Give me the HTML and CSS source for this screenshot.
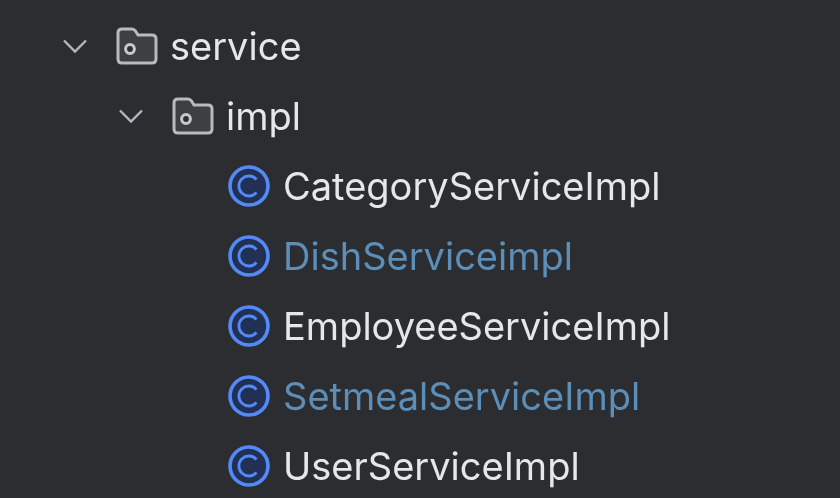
FILE: index.html
```html
<!DOCTYPE html>
<html lang="en">
<head>
    <meta charset="UTF-8">
    <title>Project Tree</title>
    <link rel="stylesheet" href="styles.css">
</head>
<body>
    <svg class="icon-defs" width="0" height="0">
        <symbol id="chevron" viewBox="0 0 26 16">
            <path d="M2 2.5 L13 13.5 L24 2.5" fill="none" stroke="#b4b6bb" stroke-width="2.4"/>
        </symbol>
        <symbol id="folder" viewBox="0 0 42 38">
            <path d="M6 2 H16 Q18 2 19.5 4 L22 8 H36 Q40 8 40 12 V32 Q40 36 36 36 H6 Q2 36 2 32 V6 Q2 2 6 2 Z" fill="#3e3f42" stroke="#b9babd" stroke-width="3"/>
            <circle cx="14" cy="22" r="4.4" fill="#2b2d30" stroke="#c9cacd" stroke-width="3"/>
        </symbol>
        <symbol id="class" viewBox="0 0 42 42">
            <circle cx="21" cy="21" r="19" fill="#223053" stroke="#548af7" stroke-width="3.6"/>
            <path d="M28.5 14.5 A10 10 0 1 0 28.5 27.5" fill="none" stroke="#548af7" stroke-width="2.8"/>
        </symbol>
    </svg>

    <ul class="tree">
        <li class="row depth-0">
            <svg class="chevron"><use href="#chevron"/></svg>
            <svg class="folder"><use href="#folder"/></svg>
            <span>service</span>
        </li>
        <li class="row depth-1">
            <svg class="chevron"><use href="#chevron"/></svg>
            <svg class="folder"><use href="#folder"/></svg>
            <span>impl</span>
        </li>
        <li class="row depth-2">
            <svg class="class-icon"><use href="#class"/></svg>
            <span>CategoryServiceImpl</span>
        </li>
        <li class="row depth-2 modified">
            <svg class="class-icon"><use href="#class"/></svg>
            <span>DishServiceimpl</span>
        </li>
        <li class="row depth-2">
            <svg class="class-icon"><use href="#class"/></svg>
            <span>EmployeeServiceImpl</span>
        </li>
        <li class="row depth-2 modified">
            <svg class="class-icon"><use href="#class"/></svg>
            <span>SetmealServiceImpl</span>
        </li>
        <li class="row depth-2">
            <svg class="class-icon"><use href="#class"/></svg>
            <span>UserServiceImpl</span>
        </li>
    </ul>
</body>
</html>
```

FILE: styles.css
```css
* {
    margin: 0;
    padding: 0;
    box-sizing: border-box;
}

html, body {
    height: 100%;
    overflow: hidden;
}

body {
    background-color: #2b2d30;
    color: #e6e7ea;
    font-family: "Inter", sans-serif;
    font-size: 38px;
}

.icon-defs {
    display: block;
}

.tree {
    list-style: none;
    padding-top: 11px;
    filter: blur(0.5px);
}

.row {
    display: flex;
    align-items: center;
    height: 70px;
    white-space: nowrap;
}

.depth-0 {
    padding-left: 62px;
}

.depth-1 {
    padding-left: 118px;
}

.depth-2 {
    padding-left: 228px;
}

.modified {
    color: #5c8eb8;
}

.chevron {
    width: 26px;
    height: 16px;
    margin-right: 28px;
}

.folder {
    width: 42px;
    height: 38px;
    margin-right: 12px;
}

.class-icon {
    width: 42px;
    height: 42px;
    margin-right: 13px;
}
```
